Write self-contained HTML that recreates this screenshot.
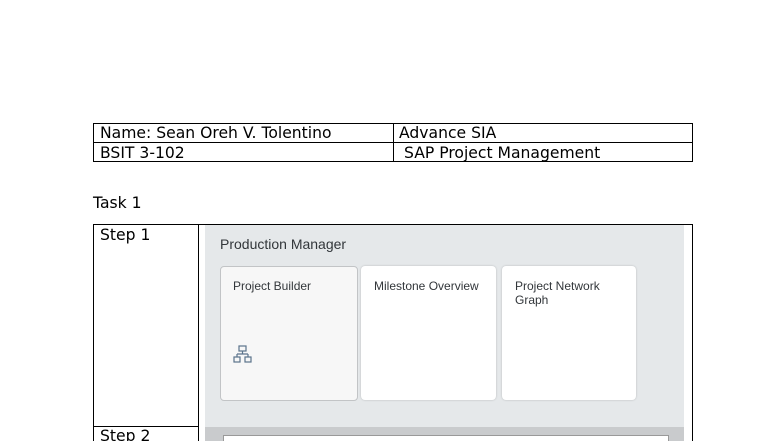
<!DOCTYPE html>
<html><head><meta charset="utf-8"><style>
html,body{margin:0;width:784px;height:441px;overflow:hidden}
body{background:#fff;position:relative;font-family:"DejaVu Sans",sans-serif;color:#000}
.a{position:absolute}
.t{font-size:15.6px;line-height:18px;white-space:nowrap}
.s{font-family:"Liberation Sans",sans-serif;color:#32363a;font-size:12px;line-height:14px}
.tile{position:absolute;top:266px;height:134px;background:#fff;border-radius:4px;box-shadow:0 0 2px rgba(0,0,0,.2)}
</style></head><body>
<div class="a" style="left:93px;top:123px;width:598px;height:37px;border:1px solid #000"></div>
<div class="a" style="left:93px;top:142px;width:600px;height:1px;background:#000"></div>
<div class="a" style="left:393px;top:123px;width:1px;height:39px;background:#000"></div>
<div class="a t" style="left:100px;top:124px">Name: Sean Oreh V. Tolentino</div>
<div class="a t" style="left:399px;top:124px">Advance SIA</div>
<div class="a t" style="left:100px;top:144px">BSIT 3-102</div>
<div class="a t" style="left:404px;top:144px">SAP Project Management</div>
<div class="a t" style="left:93px;top:194px">Task 1</div>
<div class="a" style="left:93px;top:224px;width:598px;height:216px;border:1px solid #000;border-bottom:0"></div>
<div class="a" style="left:198px;top:224px;width:1px;height:217px;background:#000"></div>
<div class="a" style="left:93px;top:426px;width:105px;height:1px;background:#000"></div>
<div class="a t" style="left:100px;top:226px">Step 1</div>
<div class="a t" style="left:100px;top:427px;height:14px;overflow:hidden">Step 2</div>
<div class="a" style="left:205px;top:225px;width:479px;height:202px;background:#e5e8ea"></div>
<div class="a" style="left:205px;top:427px;width:479px;height:14px;background:#c9cbcd"></div>
<div class="a" style="left:223px;top:435px;width:444px;height:6px;background:#fff;border:1px solid #999;border-bottom:0"></div>
<div class="a s" style="left:220px;top:236px;font-size:14px;line-height:16px">Production Manager</div>
<div class="tile" style="left:220px;width:136px;background:#f7f7f7;border:1px solid #c2c4c6;box-shadow:none;top:266px;height:133px"></div>
<div class="a s" style="left:233px;top:279px">Project Builder</div>
<svg class="a" style="left:233px;top:345px" width="20" height="20" viewBox="0 0 20 20" fill="none" stroke="#5b738b" stroke-width="1.2"><rect x="6" y="1" width="7" height="5"/><path d="M9.5 6v3M4 9h11M4 9v3M15 9v3"/><rect x="1" y="12" width="6" height="5"/><rect x="12" y="12" width="6" height="5"/></svg>
<div class="tile" style="left:361px;width:135px"></div>
<div class="a s" style="left:374px;top:279px">Milestone Overview</div>
<div class="tile" style="left:502px;width:134px"></div>
<div class="a s" style="left:515px;top:279px">Project Network<br>Graph</div>
</body></html>
